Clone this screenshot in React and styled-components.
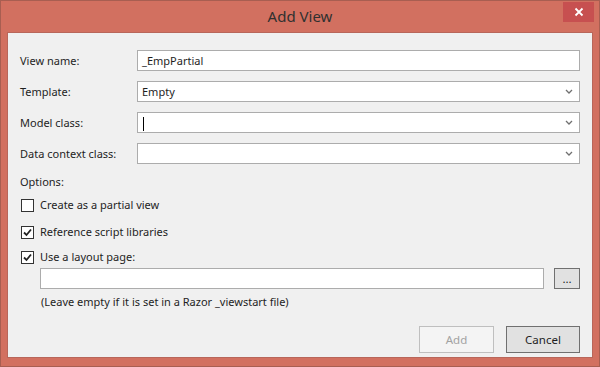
import React from "react";
import styled, { createGlobalStyle } from "styled-components";

const GlobalStyle = createGlobalStyle`
    html, body {
        margin: 0;
        padding: 0;
        background: #ffffff;
    }
    body {
        font-family: "Noto Sans", "Open Sans", sans-serif;
        font-size: 11px;
        color: #1e1e1e;
    }
`;

const Window = styled.div`
    box-sizing: border-box;
    width: 600px;
    height: 367px;
    background: #d27060;
    border: 1px solid #a85e51;
    display: flex;
    flex-direction: column;
`;

const TitleBar = styled.div`
    position: relative;
    height: 30px;
    display: flex;
    align-items: center;
    justify-content: center;
    font-size: 15px;
    color: #303030;
    padding-bottom: 1px;
`;

const CloseButton = styled.div`
    position: absolute;
    top: 1px;
    right: 5px;
    width: 31px;
    height: 20px;
    background: #c75050;
    display: flex;
    align-items: center;
    justify-content: center;
`;

const Panel = styled.div`
    box-sizing: border-box;
    margin: 0 6px 8px 6px;
    flex: 1;
    background: #f0f0f0;
    border: 1px solid #b8665a;
    padding: 17px 12px 0 12px;
    display: flex;
    flex-direction: column;
`;

const FieldGrid = styled.div`
    display: grid;
    grid-template-columns: 117px 1fr;
    row-gap: 10px;
    align-items: center;
`;

const Label = styled.div`
    line-height: 21px;
`;

const Field = styled.div`
    box-sizing: border-box;
    height: 21px;
    background: #ffffff;
    border: 1px solid #acacac;
    display: flex;
    align-items: center;
    padding: 0 6px 0 4px;
    color: #1e1e1e;
    ${(p) => (p.$grow ? "flex: 1;" : "")}
`;

const FieldText = styled.span`
    flex: 1;
`;

const Caret = styled.span`
    display: inline-block;
    width: 1px;
    height: 14px;
    background: #000000;
    margin-left: 1px;
    vertical-align: middle;
`;

const OptionsLabel = styled.div`
    margin-top: 10px;
    line-height: 16px;
`;

const CheckRow = styled.label`
    display: flex;
    align-items: center;
    gap: 6px;
    margin-top: ${(p) => p.$top}px;
    padding-left: 1px;
    line-height: 16px;
`;

const Box = styled.span`
    box-sizing: border-box;
    width: 13px;
    height: 13px;
    border: 1px solid #333333;
    background: #ffffff;
    display: flex;
    align-items: center;
    justify-content: center;
`;

const PathRow = styled.div`
    display: flex;
    gap: 10px;
    margin-top: 3px;
    padding-left: 20px;
`;

const Hint = styled.div`
    margin-top: 3px;
    padding-left: 21px;
    line-height: 20px;
`;

const Footer = styled.div`
    margin-top: auto;
    margin-bottom: 4px;
    display: flex;
    justify-content: flex-end;
    gap: 12px;
`;

const Button = styled.div`
    box-sizing: border-box;
    width: ${(p) => p.$w}px;
    height: ${(p) => p.$h}px;
    display: flex;
    align-items: center;
    justify-content: center;
    background: ${(p) => (p.$disabled ? "#f4f4f4" : "#e1e1e1")};
    border: 1px solid ${(p) => (p.$disabled ? "#bfbfbf" : "#707070")};
    color: ${(p) => (p.$disabled ? "#a2a2a2" : "#1e1e1e")};
    font-size: 11.5px;
`;

function Chevron() {
    return (
        <svg width="8" height="5" viewBox="0 0 8 5">
            <path d="M1 1 L4 4 L7 1" fill="none" stroke="#707070" strokeWidth="1.3" />
        </svg>
    );
}

function Check() {
    return (
        <svg width="11" height="11" viewBox="0 0 11 11">
            <path d="M2 5.5 L4.5 8 L9 2.5" fill="none" stroke="#222222" strokeWidth="1.8" />
        </svg>
    );
}

function CheckOption({ checked, top, children }) {
    return (
        <CheckRow $top={top}>
            <Box>{checked && <Check />}</Box>
            {children}
        </CheckRow>
    );
}

export default function App() {
    return (
        <>
            <GlobalStyle />
            <Window>
                <TitleBar>
                    Add View
                    <CloseButton>
                        <svg width="10" height="10" viewBox="0 0 10 10">
                            <path d="M1.5 1.5 L8.5 8.5 M8.5 1.5 L1.5 8.5" stroke="#ffffff" strokeWidth="1.8" />
                        </svg>
                    </CloseButton>
                </TitleBar>
                <Panel>
                    <FieldGrid>
                        <Label>View name:</Label>
                        <Field>
                            <FieldText>_EmpPartial</FieldText>
                        </Field>
                        <Label>Template:</Label>
                        <Field>
                            <FieldText>Empty</FieldText>
                            <Chevron />
                        </Field>
                        <Label>Model class:</Label>
                        <Field>
                            <FieldText>
                                <Caret />
                            </FieldText>
                            <Chevron />
                        </Field>
                        <Label>Data context class:</Label>
                        <Field>
                            <FieldText />
                            <Chevron />
                        </Field>
                    </FieldGrid>
                    <OptionsLabel>Options:</OptionsLabel>
                    <CheckOption top={7}>Create as a partial view</CheckOption>
                    <CheckOption checked top={11}>
                        Reference script libraries
                    </CheckOption>
                    <CheckOption checked top={9}>
                        Use a layout page:
                    </CheckOption>
                    <PathRow>
                        <Field $grow />
                        <Button $w={26} $h={21}>...</Button>
                    </PathRow>
                    <Hint>(Leave empty if it is set in a Razor _viewstart file)</Hint>
                    <Footer>
                        <Button $w={75} $h={27} $disabled>
                            Add
                        </Button>
                        <Button $w={74} $h={27}>
                            Cancel
                        </Button>
                    </Footer>
                </Panel>
            </Window>
        </>
    );
}
